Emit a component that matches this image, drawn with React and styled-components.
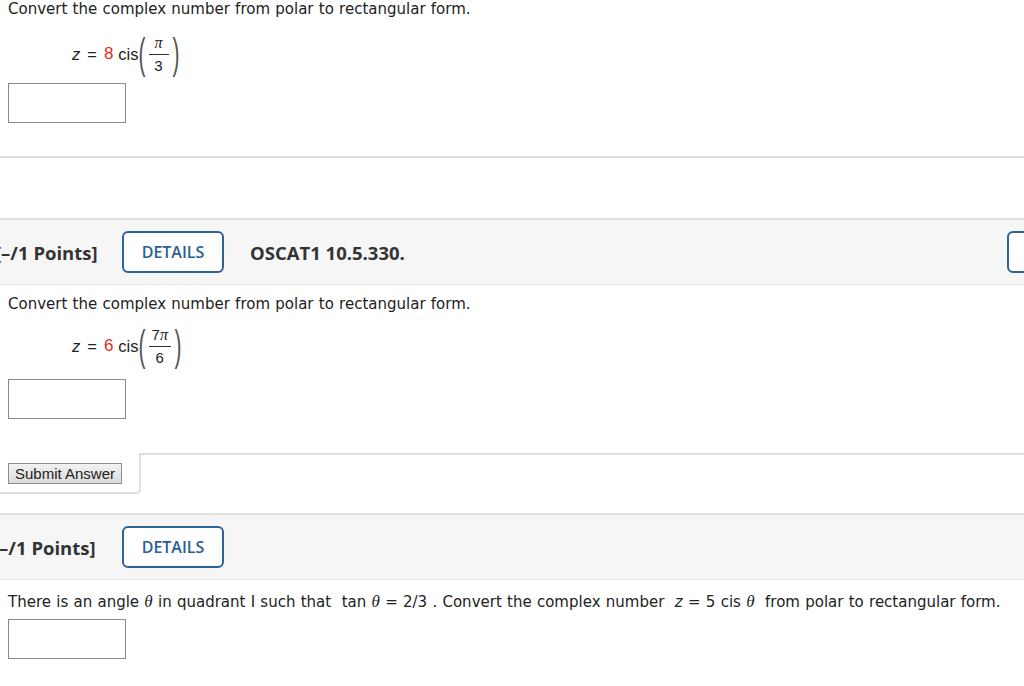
import React from "react";
import styled, { createGlobalStyle } from "styled-components";

const Global = createGlobalStyle`
    html, body {
        margin: 0;
        padding: 0;
        background: #fff;
        overflow: hidden;
    }
`;

const Page = styled.div`
    width: 1024px;
    height: 686px;
    overflow: hidden;
    display: flex;
    flex-direction: column;
    font-family: "DejaVu Sans", Verdana, sans-serif;
    color: #222;
`;

const Question = styled.div`
    display: flex;
    flex-direction: column;
    padding: ${(p) => p.pad || "0 0 0 8px"};
`;

const Prompt = styled.p`
    margin: 0;
    font-size: 15px;
    line-height: 18px;
    word-spacing: 0.5px;
    white-space: nowrap;
`;

const Eq = styled.div`
    display: flex;
    align-items: center;
    margin: ${(p) => p.m || "14px 0 0 64px"};
    font-family: "Liberation Sans", Arial, sans-serif;
    font-size: 16.5px;
    color: #222;
`;

const Var = styled.i`
    font-family: "Liberation Sans", Arial, sans-serif;
    margin-right: 7px;
`;

const Op = styled.span`
    margin-right: 7px;
`;

const Num = styled.span`
    color: #e8291c;
    margin-right: 5px;
    font-size: 17px;
`;

const Paren = styled.span`
    display: inline-block;
    font-size: 42px;
    line-height: 42px;
    font-weight: 300;
    color: #555;
    transform: scaleX(0.5);
    margin: 0 -4px;
`;

const Frac = styled.span`
    display: inline-flex;
    flex-direction: column;
    align-items: center;
    margin: 0 4px;
    font-size: 15px;
    line-height: 16px;
`;

const FracTop = styled.span`
    padding: 0 3px 3px;
    border-bottom: 1px solid #333;
    min-width: 14px;
    text-align: center;
`;

const FracBottom = styled.span`
    padding-top: 3px;
`;

const Pi = styled.i`
    font-family: "Liberation Serif", "Times New Roman", serif;
    font-size: 16px;
`;

const Theta = styled.i`
    font-family: "Liberation Serif", "Times New Roman", serif;
    font-size: 17px;
`;

const Answer = styled.input`
    width: 118px;
    height: 40px;
    box-sizing: border-box;
    border: 1px solid #8a8a8a;
    margin: ${(p) => p.m || "12px 0 0 0"};
    background: #fff;
    padding: 0;
`;

const Divider = styled.div`
    margin-top: 33px;
    border-bottom: 2px solid #dedede;
`;

const Gap = styled.div`
    height: ${(p) => p.h}px;
`;

const Header = styled.div`
    height: 67px;
    box-sizing: border-box;
    background: #f6f6f6;
    border-top: 2px solid #e2e2e2;
    border-bottom: 1px solid #e6e6e6;
    display: flex;
    align-items: center;
    position: relative;
    font-family: "Open Sans", sans-serif;
`;

const Points = styled.span`
    font-weight: 700;
    font-size: 18.5px;
    color: #333;
    margin-left: ${(p) => p.shift}px;
    width: ${(p) => 122 - p.shift}px;
    white-space: nowrap;
`;

const DetailsButton = styled.button`
    width: 102px;
    height: 42px;
    box-sizing: border-box;
    border: 2px solid #2d6397;
    border-radius: 6px;
    background: #fff;
    color: #2b5f91;
    font-family: "Open Sans", sans-serif;
    font-weight: 600;
    font-size: 16px;
    padding: 0;
`;

const Code = styled.span`
    margin-left: 26px;
    font-weight: 700;
    font-size: 18.5px;
    color: #333;
`;

const EdgeButton = styled.div`
    position: absolute;
    left: 1007px;
    top: 11px;
    width: 60px;
    height: 42px;
    box-sizing: border-box;
    border: 2px solid #2d6397;
    border-radius: 6px;
    background: #fff;
`;

const SubmitRow = styled.div`
    display: flex;
    margin-top: 34px;
`;

const SubmitCell = styled.div`
    width: 141px;
    height: 41px;
    box-sizing: border-box;
    border-right: 2px solid #dedede;
    border-bottom: 2px solid #dedede;
    border-bottom-right-radius: 5px;
    display: flex;
    align-items: center;
    padding: 0 0 0 8px;
`;

const RestCell = styled.div`
    flex: 1;
    border-top: 2px solid #dedede;
    margin-left: -2px;
    border-top-left-radius: 3px;
`;

const SubmitButton = styled.button`
    height: 21px;
    width: 114px;
    box-sizing: border-box;
    border: 1px solid #8c8c8c;
    background: linear-gradient(#f2f2f2, #dcdcdc);
    font-family: "Liberation Sans", Arial, sans-serif;
    font-size: 15px;
    line-height: 17px;
    color: #222;
    padding: 0;
    margin-top: 1px;
`;

const Polar = ({ r, top, bottom, m }) => (
    <Eq m={m}>
        <Var>z</Var>
        <Op>=</Op>
        <Num>{r}</Num>
        <span>cis</span>
        <Paren>(</Paren>
        <Frac>
            <FracTop>{top}</FracTop>
            <FracBottom>{bottom}</FracBottom>
        </Frac>
        <Paren>)</Paren>
    </Eq>
);

const App = () => {
    return (
        <Page>
            <Global />
            <Question pad="0 0 0 8px">
                <Prompt>Convert the complex number from polar to rectangular form.</Prompt>
                <Polar r="8" top={<Pi>π</Pi>} bottom="3" m="15px 0 0 64px" />
                <Answer m="8px 0 0 0" />
            </Question>
            <Divider />
            <Gap h={60} />
            <Header>
                <Points shift={-5}>[–/1 Points]</Points>
                <DetailsButton>DETAILS</DetailsButton>
                <Code>OSCAT1 10.5.330.</Code>
                <EdgeButton />
            </Header>
            <Question pad="10px 0 0 8px">
                <Prompt>Convert the complex number from polar to rectangular form.</Prompt>
                <Polar r="6" top={<>7<Pi>π</Pi></>} bottom="6" m="12px 0 0 64px" />
                <Answer m="12px 0 0 0" />
            </Question>
            <SubmitRow>
                <SubmitCell>
                    <SubmitButton>Submit Answer</SubmitButton>
                </SubmitCell>
                <RestCell />
            </SubmitRow>
            <Gap h={19} />
            <Header>
                <Points shift={-7}>[–/1 Points]</Points>
                <DetailsButton>DETAILS</DetailsButton>
            </Header>
            <Question pad="13px 0 0 8px">
                <Prompt>
                    There is an angle <Theta>θ</Theta> in quadrant I such that&nbsp; tan <Theta>θ</Theta> = 2/3 . Convert the complex number&nbsp; <i>z</i> = 5 cis <Theta>θ</Theta>&nbsp; from polar to rectangular form.
                </Prompt>
                <Answer m="8px 0 0 0" />
            </Question>
        </Page>
    );
};

export default App;
